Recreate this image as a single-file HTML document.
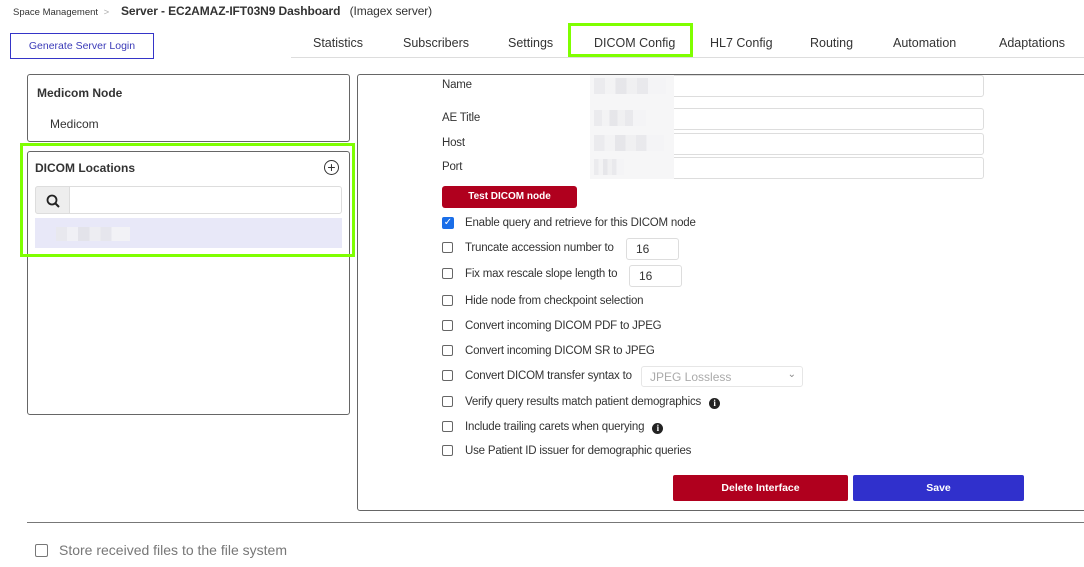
<!DOCTYPE html>
<html><head><style>
*{box-sizing:border-box;margin:0;padding:0}
body{width:1084px;height:567px;overflow:hidden;background:#fff;font-family:"Liberation Sans",sans-serif;color:#333;position:relative}
.a{position:absolute}
.inp{position:absolute;border:1px solid #ddd;border-radius:3px;background:#fff}
.blur{position:absolute;background:linear-gradient(90deg,#e8e8ec 0 15%,#f2f2f4 15% 30%,#e2e2e6 30% 45%,#eeeef0 45% 60%,#e6e6ea 60% 75%,#f4f4f6 75%);opacity:.8}
.cb{position:absolute;width:11px;height:11px;border:1px solid #666;border-radius:2px;background:#fff}
.lbl{position:absolute;font-size:11.5px;letter-spacing:-0.2px;color:#333;white-space:nowrap}
.tab{position:absolute;top:36px;font-size:12.5px;color:#333}
.info{display:inline-block;width:11px;height:11px;border-radius:50%;background:#222;color:#fff;font-size:9px;font-weight:bold;text-align:center;line-height:11px;margin-left:8px;vertical-align:-1px;font-family:"Liberation Serif",serif}
</style></head><body>
<div class="a" style="left:13px;top:7px;font-size:9.5px;color:#333;white-space:nowrap">Space Management <span style="color:#aaa;margin:0 3px">&gt;</span></div>
<div class="a" style="left:121px;top:4px;font-size:12px;font-weight:bold;color:#333;white-space:nowrap;letter-spacing:-0.1px">Server - EC2AMAZ-IFT03N9 Dashboard <span style="font-weight:normal;margin-left:6px">(Imagex server)</span></div>
<div class="a" style="left:10px;top:33px;width:144px;height:26px;border:1px solid #3535c8;font-size:10.5px;color:#3a3ab8;text-align:center;line-height:24px">Generate Server Login</div>
<div class="tab" style="left:313px">Statistics</div>
<div class="tab" style="left:403px">Subscribers</div>
<div class="tab" style="left:508px">Settings</div>
<div class="tab" style="left:594px">DICOM Config</div>
<div class="tab" style="left:710px">HL7 Config</div>
<div class="tab" style="left:810px">Routing</div>
<div class="tab" style="left:893px">Automation</div>
<div class="tab" style="left:999px">Adaptations</div>
<div class="a" style="left:291px;top:57px;width:793px;height:1px;background:#ddd"></div>
<div class="a" style="left:568px;top:23px;width:125px;height:34px;border:3px solid #7fff00"></div>

<div class="a" style="left:27px;top:74px;width:323px;height:68px;border:1px solid #666;border-radius:3px"></div>
<div class="a" style="left:37px;top:86px;font-size:12px;font-weight:bold;color:#333">Medicom Node</div>
<div class="a" style="left:50px;top:117px;font-size:12px">Medicom</div>

<div class="a" style="left:27px;top:151px;width:323px;height:264px;border:1px solid #666;border-radius:3px"></div>
<div class="a" style="left:20px;top:143px;width:335px;height:114px;border:3px solid #7fff00"></div>
<div class="a" style="left:35px;top:161px;font-size:12px;font-weight:bold">DICOM Locations</div>
<div class="a" style="left:324px;top:160px;width:15px;height:15px;border:1px solid #333;border-radius:50%;text-align:center;line-height:12px;font-size:14px">+</div>
<div class="a" style="left:35px;top:186px;width:307px;height:28px;border:1px solid #ddd;border-radius:3px"></div>
<div class="a" style="left:35px;top:186px;width:35px;height:28px;background:#eee;border:1px solid #ddd;border-radius:3px 0 0 3px"><svg width="35" height="28"><circle cx="16" cy="13" r="4.5" stroke="#222" stroke-width="1.8" fill="none"/><line x1="19.5" y1="16.5" x2="23" y2="20" stroke="#222" stroke-width="2"/></svg></div>
<div class="a" style="left:35px;top:218px;width:307px;height:30px;background:#e8e8f8"></div>
<div class="blur" style="left:56px;top:227px;width:74px;height:14px"></div>

<div class="a" style="left:357px;top:74px;width:740px;height:437px;border:1px solid #666;border-radius:3px"></div>
<div class="lbl" style="left:442px;top:79px">Name</div>
<div class="lbl" style="left:442px;top:112px">AE Title</div>
<div class="lbl" style="left:442px;top:137px">Host</div>
<div class="lbl" style="left:442px;top:161px">Port</div>
<div class="inp" style="left:590px;top:75px;width:394px;height:22px"></div>
<div class="inp" style="left:590px;top:108px;width:394px;height:22px"></div>
<div class="inp" style="left:590px;top:133px;width:394px;height:22px"></div>
<div class="inp" style="left:590px;top:157px;width:394px;height:22px"></div>
<div class="a" style="left:590px;top:75px;width:84px;height:104px;background:#f6f6f7"></div>
<div class="blur" style="left:594px;top:78px;width:72px;height:16px"></div>
<div class="blur" style="left:594px;top:110px;width:52px;height:16px"></div>
<div class="blur" style="left:594px;top:135px;width:70px;height:16px"></div>
<div class="blur" style="left:594px;top:159px;width:30px;height:16px"></div>
<div class="a" style="left:442px;top:186px;width:135px;height:22px;background:#b0001e;border-radius:3px;color:#fff;font-size:10px;font-weight:bold;text-align:center;line-height:22px">Test DICOM node</div>

<div class="a" style="left:442px;top:217px;width:12px;height:12px;background:#1a6ee8;border-radius:2px;color:#fff;font-size:10px;line-height:12px;text-align:center">✓</div>
<div class="lbl" style="left:465px;top:217px">Enable query and retrieve for this DICOM node</div>
<div class="cb" style="left:442px;top:242px"></div>
<div class="lbl" style="left:465px;top:242px">Truncate accession number to</div>
<div class="inp" style="left:626px;top:238px;width:53px;height:22px;font-size:12px;padding:3px 9px">16</div>
<div class="cb" style="left:442px;top:268px"></div>
<div class="lbl" style="left:465px;top:268px">Fix max rescale slope length to</div>
<div class="inp" style="left:629px;top:265px;width:53px;height:22px;font-size:12px;padding:3px 9px">16</div>
<div class="cb" style="left:442px;top:295px"></div>
<div class="lbl" style="left:465px;top:295px">Hide node from checkpoint selection</div>
<div class="cb" style="left:442px;top:320px"></div>
<div class="lbl" style="left:465px;top:320px">Convert incoming DICOM PDF to JPEG</div>
<div class="cb" style="left:442px;top:345px"></div>
<div class="lbl" style="left:465px;top:345px">Convert incoming DICOM SR to JPEG</div>
<div class="cb" style="left:442px;top:370px"></div>
<div class="lbl" style="left:465px;top:370px">Convert DICOM transfer syntax to</div>
<div class="inp" style="left:641px;top:366px;width:162px;height:21px;font-size:12px;color:#aaa;padding:3px 8px;border-color:#e6e6e6">JPEG Lossless<span style="position:absolute;right:6px;top:2px;color:#888;font-size:10px">&#8964;</span></div>
<div class="cb" style="left:442px;top:396px"></div>
<div class="lbl" style="left:465px;top:396px">Verify query results match patient demographics<span class="info">i</span></div>
<div class="cb" style="left:442px;top:421px"></div>
<div class="lbl" style="left:465px;top:421px">Include trailing carets when querying<span class="info">i</span></div>
<div class="cb" style="left:442px;top:445px"></div>
<div class="lbl" style="left:465px;top:445px">Use Patient ID issuer for demographic queries</div>
<div class="a" style="left:673px;top:475px;width:175px;height:26px;background:#b0001e;border-radius:2px;color:#fff;font-size:10.5px;font-weight:bold;text-align:center;line-height:26px">Delete Interface</div>
<div class="a" style="left:853px;top:475px;width:171px;height:26px;background:#3030cc;border-radius:2px;color:#fff;font-size:10.5px;font-weight:bold;text-align:center;line-height:26px">Save</div>

<div class="a" style="left:27px;top:522px;width:1057px;height:1px;background:#777"></div>
<div class="a" style="left:35px;top:544px;width:13px;height:13px;border:1px solid #777;border-radius:2px"></div>
<div class="a" style="left:59px;top:542px;font-size:14px;color:#777;white-space:nowrap">Store received files to the file system</div>
</body></html>
